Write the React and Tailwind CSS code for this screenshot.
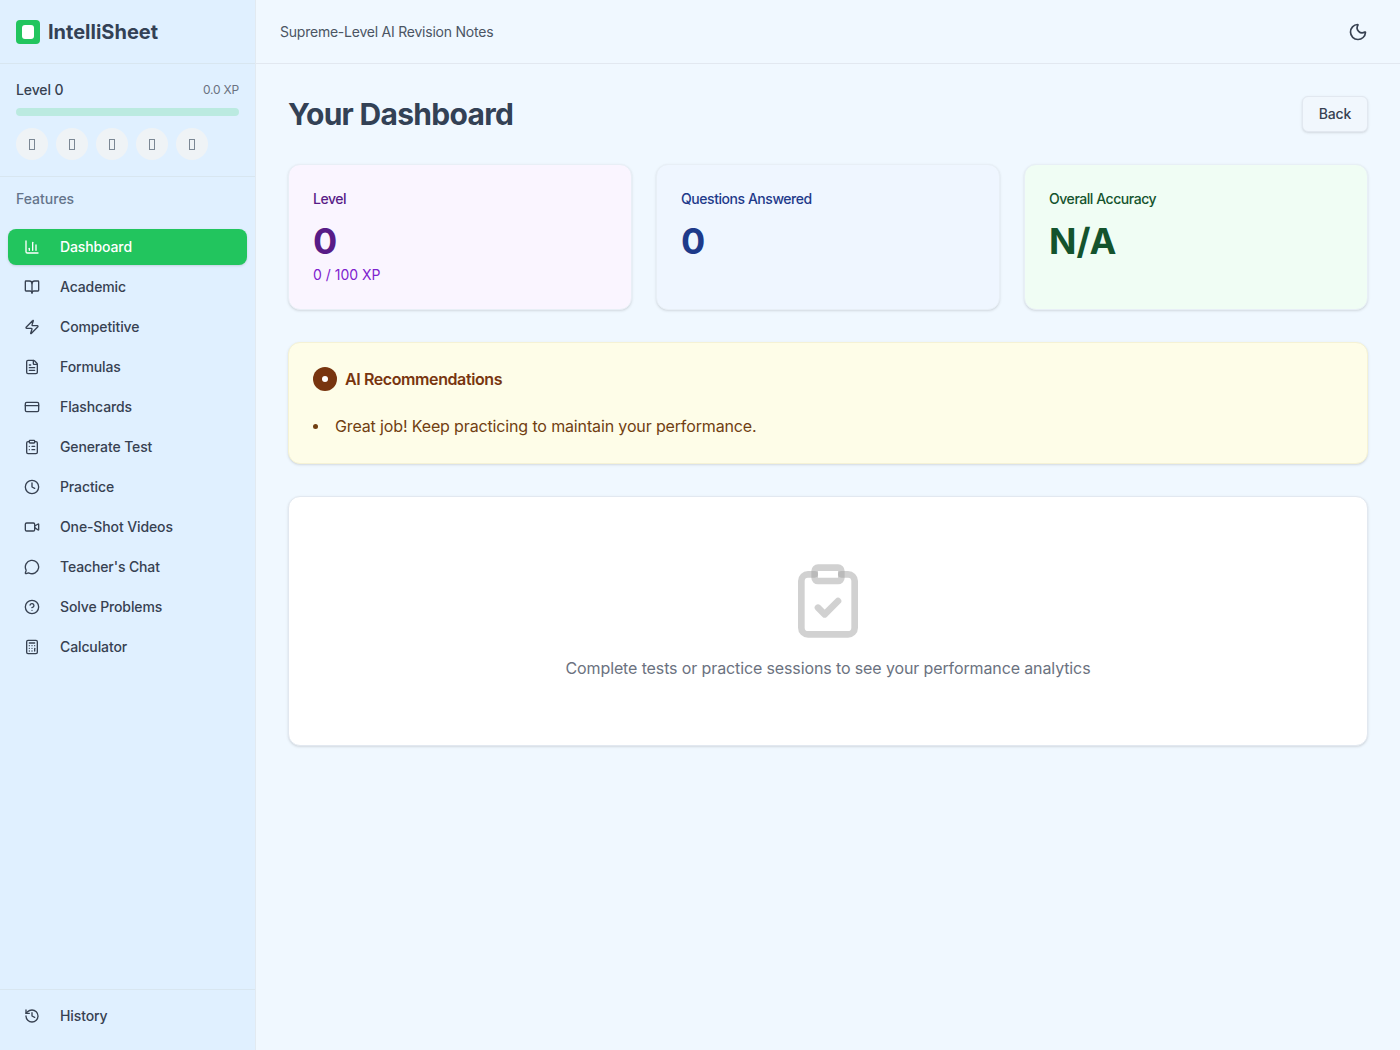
import React from 'react';
import {
  ChartColumn, BookOpen, Zap, FileText, CreditCard, ClipboardList, Clock, Video,
  MessageCircle, CircleHelp, Calculator, History, Moon, ClipboardCheck,
} from 'lucide-react';

const navItems = [
  { label: 'Dashboard', icon: ChartColumn, active: true },
  { label: 'Academic', icon: BookOpen },
  { label: 'Competitive', icon: Zap },
  { label: 'Formulas', icon: FileText },
  { label: 'Flashcards', icon: CreditCard },
  { label: 'Generate Test', icon: ClipboardList },
  { label: 'Practice', icon: Clock },
  { label: 'One-Shot Videos', icon: Video },
  { label: "Teacher's Chat", icon: MessageCircle },
  { label: 'Solve Problems', icon: CircleHelp },
  { label: 'Calculator', icon: Calculator },
];

const NavItem = ({ label, icon: Icon, active }) => (
  <button
    className={`w-full h-9 flex items-center gap-5 px-4 rounded-lg text-sm font-medium text-left tracking-[-0.12px] ${
      active ? 'bg-[#22c55e] text-white shadow-sm' : 'text-[#374151]'
    }`}
  >
    <Icon size={16} strokeWidth={2} />
    <span>{label}</span>
  </button>
);

const StatCard = ({ bg, titleColor, valueColor, title, value, sub, subColor }) => (
  <div className={`h-[146px] p-6 rounded-xl border border-[#e8eff6] shadow-sm ${bg}`}>
    <p className={`text-sm font-medium leading-5 tracking-[-0.45px] ${titleColor}`}>{title}</p>
    <p className={`text-4xl font-bold leading-10 mt-3 ${valueColor}`}>{value}</p>
    {sub && <p className={`text-sm leading-5 mt-1 ${subColor}`}>{sub}</p>}
  </div>
);

const App = () => {
  return (
    <div className="flex h-screen bg-[#f0f8ff] font-['Inter','Liberation_Sans',sans-serif] text-[#374151] overflow-hidden">
      <aside className="w-64 shrink-0 flex flex-col bg-[#e0f0ff] border-r border-[#e2eaf1]">
        <div className="h-16 shrink-0 flex items-center gap-2 px-4 border-b border-[#d8e6f0]">
          <div className="w-6 h-6 rounded bg-[#22c55e] flex items-center justify-center">
            <div className="w-3 h-[14px] rounded-[3px] bg-white"></div>
          </div>
          <span className="text-xl font-bold text-[#334155]">IntelliSheet</span>
        </div>

        <div className="h-[113px] shrink-0 px-4 pt-4 border-b border-[#d8e6f0]">
          <div className="flex items-center justify-between h-5">
            <span className="text-sm font-medium text-[#374151] tracking-[-0.1px]">Level 0</span>
            <span className="text-xs text-[#6b7280] tracking-[-0.2px]">0.0 XP</span>
          </div>
          <div className="h-2 mt-2 rounded-full bg-[#bbeae0]"></div>
          <div className="flex gap-2 mt-3">
            {[0, 1, 2, 3, 4].map((i) => (
              <div key={i} className="w-8 h-8 rounded-full bg-[#eff3f6] flex items-center justify-center">
                <div className="w-[6px] h-[11px] border border-[#7b8794]"></div>
              </div>
            ))}
          </div>
        </div>

        <p className="px-4 mt-3 h-5 text-sm font-medium leading-5 text-[#64748b]">Features</p>

        <nav className="flex-1 px-2 mt-5 space-y-1">
          {navItems.map((item) => (
            <NavItem key={item.label} {...item} />
          ))}
        </nav>

        <div className="h-[61px] shrink-0 px-2 pb-2 flex items-center border-t border-[#d8e6f0]">
          <NavItem label="History" icon={History} />
        </div>
      </aside>

      <div className="flex-1 flex flex-col min-w-0">
        <header className="h-16 shrink-0 flex items-center justify-between pl-6 pr-8 border-b border-[#e2e8f0]">
          <span className="text-sm text-[#4b5563] tracking-[-0.23px]">Supreme-Level AI Revision Notes</span>
          <Moon size={20} strokeWidth={2} className="text-[#374151]" />
        </header>

        <main className="flex-1 p-8">
          <div className="flex items-center justify-between mb-8">
            <h1 className="text-3xl font-bold text-[#334155] tracking-[-0.7px]">Your Dashboard</h1>
            <button className="h-9 w-[66px] rounded-md border border-[#e2e8f0] bg-[#f1f7fd] shadow-sm text-sm font-medium text-[#374151] tracking-[-0.15px]">
              Back
            </button>
          </div>

          <div className="grid grid-cols-3 gap-6 mb-8">
            <StatCard
              bg="bg-[#faf5ff]"
              titleColor="text-[#581c87]"
              valueColor="text-[#581c87]"
              title="Level"
              value="0"
              sub="0 / 100 XP"
              subColor="text-[#7e22ce]"
            />
            <StatCard
              bg="bg-[#eff6ff]"
              titleColor="text-[#1e3a8a]"
              valueColor="text-[#1e3a8a]"
              title="Questions Answered"
              value="0"
            />
            <StatCard
              bg="bg-[#f0fdf4]"
              titleColor="text-[#14532d]"
              valueColor="text-[#14532d]"
              title="Overall Accuracy"
              value="N/A"
            />
          </div>

          <div className="h-[122px] p-6 mb-8 rounded-xl border border-[#f5f2d5] bg-[#fefde8] shadow-sm">
            <div className="flex items-center gap-2">
              <div className="w-6 h-6 rounded-full bg-[#78350f] flex items-center justify-center">
                <div className="w-[6px] h-[6px] rounded-full bg-white"></div>
              </div>
              <h2 className="text-base font-semibold text-[#78350f] tracking-[-0.4px]">AI Recommendations</h2>
            </div>
            <ul className="mt-[23px] text-[#713f12] text-base leading-6 tracking-[-0.14px]">
              <li className="flex items-center gap-[17px]">
                <span className="w-[5px] h-[5px] rounded-full bg-[#713f12]"></span>
                <span>Great job! Keep practicing to maintain your performance.</span>
              </li>
            </ul>
          </div>

          <div className="h-[250px] flex flex-col items-center rounded-xl border border-[#e2e8f0] bg-white shadow-sm pt-[64px]">
            <ClipboardCheck size={80} strokeWidth={2} className="text-[#a3a3a3]/50" />
            <p className="mt-[15px] text-base leading-6 text-[#6b7280] tracking-[-0.12px]">
              Complete tests or practice sessions to see your performance analytics
            </p>
          </div>
        </main>
      </div>
    </div>
  );
};

export default App;
